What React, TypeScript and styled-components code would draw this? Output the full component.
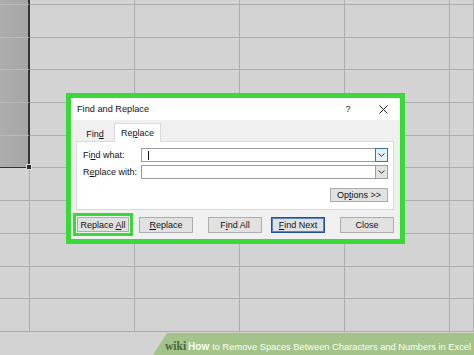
import React from 'react';
import styled, { createGlobalStyle, css } from 'styled-components';

const Global = createGlobalStyle`
  html, body { margin: 0; padding: 0; background: #d3d3d3; }
  body { font-family: "Liberation Sans", Arial, sans-serif; }
`;

const Page = styled.div`
  position: relative;
  width: 474px;
  height: 355px;
  overflow: hidden;
  background: #d3d3d3;
`;

const Sheet = styled.div`
  display: grid;
  grid-template-columns: 30px repeat(4, 105px) 1fr;
  grid-template-rows: 5px repeat(10, 32.7px);
`;

const Cell = styled.div<{ $sel?: boolean; $selLast?: boolean }>`
  position: relative;
  box-sizing: border-box;
  background: #d3d3d3;
  border-right: 1px solid #adadad;
  border-bottom: 1px solid #adadad;
  ${(p) =>
    p.$sel &&
    css`
      background: linear-gradient(90deg, #adadad 0%, #a6a6a6 100%);
      border-right: 2px solid #333;
      border-bottom-color: #bababa;
    `}
  ${(p) =>
    p.$selLast &&
    css`
      border-bottom: 1px solid #333;
    `}
`;

const Handle = styled.span`
  position: absolute;
  right: -4px;
  bottom: -3px;
  width: 4px;
  height: 4px;
  background: #2b2b2b;
  border: 1px solid #e0e0e0;
  z-index: 2;
`;

const Highlight = styled.div`
  position: absolute;
  left: 66px;
  top: 93px;
  width: 339px;
  height: 151px;
  box-sizing: border-box;
  border: 5px solid #3ad93a;
`;

const Dialog = styled.div`
  width: 100%;
  height: 100%;
  display: flex;
  flex-direction: column;
  background: #f0f0f0;
  color: #111;
  font-size: 9px;
`;

const TitleBar = styled.div`
  height: 22px;
  flex: none;
  display: flex;
  align-items: center;
  padding: 0 7px 0 6px;
  background: #fff;
`;

const Title = styled.span`
  font-size: 9.2px;
  color: #111;
`;

const Help = styled.span`
  margin-left: auto;
  width: 12px;
  text-align: center;
  font-size: 9px;
`;

const CloseX = styled.span`
  width: 20px;
  margin-left: 19px;
  display: flex;
  justify-content: center;
`;

const Body = styled.div`
  flex: 1;
  display: flex;
  flex-direction: column;
  padding: 3px 6px 0 5px;
`;

const TabStrip = styled.div`
  display: flex;
  align-items: flex-end;
  height: 18px;
  padding-left: 2px;
  position: relative;
  z-index: 1;
`;

const Tab = styled.div<{ $active?: boolean }>`
  box-sizing: border-box;
  display: flex;
  align-items: center;
  justify-content: center;
  height: ${(p) => (p.$active ? '19px' : '16px')};
  width: ${(p) => (p.$active ? '47px' : '34px')};
  margin-left: ${(p) => (p.$active ? '2px' : '0')};
  margin-bottom: ${(p) => (p.$active ? '-1px' : '0')};
  padding-top: ${(p) => (p.$active ? '0' : '1px')};
  background: ${(p) => (p.$active ? '#fff' : 'transparent')};
  border: ${(p) => (p.$active ? '1px solid #d9d9d9' : 'none')};
  border-bottom: none;
`;

const Key = styled.span`
  text-decoration: underline;
`;

const Panel = styled.div`
  box-sizing: border-box;
  height: 69px;
  background: #fff;
  border: 1px solid #d9d9d9;
  padding: 6px 5px 0 6px;
  display: flex;
  flex-direction: column;
`;

const FieldRow = styled.div<{ $gap?: number }>`
  display: flex;
  align-items: center;
  height: 14px;
  margin-top: ${(p) => p.$gap ?? 0}px;
`;

const Label = styled.span`
  width: 58px;
  flex: none;
`;

const Combo = styled.div`
  flex: 1;
  display: flex;
  height: 14px;
`;

const Field = styled.div`
  flex: 1;
  box-sizing: border-box;
  border: 1px solid #9c9c9c;
  border-right: none;
  background: #fff;
  display: flex;
  align-items: center;
  padding-left: 6px;
`;

const Caret = styled.span`
  width: 1px;
  height: 9px;
  background: #111;
`;

const DropBtn = styled.div<{ $focus?: boolean }>`
  box-sizing: border-box;
  width: 13px;
  height: 14px;
  display: flex;
  align-items: center;
  justify-content: center;
  border: 1px solid ${(p) => (p.$focus ? '#3b6fb0' : '#9c9c9c')};
  background: ${(p) => (p.$focus ? '#e5f1fb' : '#e3e3e3')};
`;

const OptionsRow = styled.div`
  display: flex;
  justify-content: flex-end;
  margin-top: 9px;
`;

const Button = styled.div<{ $default?: boolean; $ml?: number; $w?: number; $h?: number }>`
  box-sizing: border-box;
  width: ${(p) => p.$w ?? 54}px;
  height: ${(p) => p.$h ?? 16}px;
  margin-left: ${(p) => p.$ml ?? 0}px;
  display: flex;
  align-items: center;
  justify-content: center;
  background: #e1e1e1;
  border: 1px solid #adadad;
  font-size: 9px;
  color: #111;
  white-space: pre;
  ${(p) =>
    p.$default &&
    css`
      border: 1px solid #23509c;
      box-shadow: inset 0 0 0 1px #5a83c4;
    `}
`;

const ButtonRow = styled.div`
  display: flex;
  align-items: center;
  height: 23px;
  margin-top: 3px;
  margin-left: -3px;
`;

const GreenBox = styled.div`
  box-sizing: border-box;
  width: 60px;
  height: 23px;
  border: 3px solid #3ad93a;
  padding: 1px;
  display: flex;
  background: #f0f0f0;
`;

const Watermark = styled.div`
  position: absolute;
  left: 153px;
  right: 0;
  bottom: 0;
  height: 22px;
  background: rgba(160, 194, 135, 0.95);
  clip-path: polygon(14px 0, 100% 0, 100% 100%, 0 100%);
  display: flex;
  align-items: flex-end;
  padding: 0 0 3px 12px;
  box-sizing: border-box;
  white-space: nowrap;
  color: #fbfff6;
  font-size: 9.3px;
`;

const WikiMark = styled.span`
  font-family: "Liberation Serif", "Times New Roman", serif;
  font-weight: bold;
  font-size: 11.5px;
  color: #49683a;
  margin-right: 2px;
`;

const HowMark = styled.span`
  font-weight: bold;
  font-size: 10px;
  margin-right: 3px;
`;

const Chevron = () => (
  <svg width="7" height="4" viewBox="0 0 7 4">
    <path d="M0.5 0.5 L3.5 3.3 L6.5 0.5" fill="none" stroke="#333" strokeWidth="1" />
  </svg>
);

const XIcon = () => (
  <svg width="9" height="9" viewBox="0 0 9 9">
    <path d="M0.5 0.5 L8.5 8.5 M8.5 0.5 L0.5 8.5" stroke="#222" strokeWidth="1" />
  </svg>
);

const ROWS = 11;
const COLS = 6;

export default function App() {
  const cells: React.ReactNode[] = [];
  for (let r = 0; r < ROWS; r++) {
    for (let c = 0; c < COLS; c++) {
      const sel = c === 0 && r <= 5;
      const last = c === 0 && r === 5;
      cells.push(
        <Cell key={`${r}-${c}`} $sel={sel} $selLast={last}>
          {last && <Handle />}
        </Cell>
      );
    }
  }

  return (
    <Page>
      <Global />
      <Sheet>{cells}</Sheet>
      <Highlight>
        <Dialog>
          <TitleBar>
            <Title>Find and Replace</Title>
            <Help>?</Help>
            <CloseX>
              <XIcon />
            </CloseX>
          </TitleBar>
          <Body>
            <TabStrip>
              <Tab>
                <span>
                  Fin<Key>d</Key>
                </span>
              </Tab>
              <Tab $active>
                <span>
                  Re<Key>p</Key>lace
                </span>
              </Tab>
            </TabStrip>
            <Panel>
              <FieldRow>
                <Label>
                  Fi<Key>n</Key>d what:
                </Label>
                <Combo>
                  <Field>
                    <Caret />
                  </Field>
                  <DropBtn $focus>
                    <Chevron />
                  </DropBtn>
                </Combo>
              </FieldRow>
              <FieldRow $gap={3}>
                <Label>
                  R<Key>e</Key>place with:
                </Label>
                <Combo>
                  <Field />
                  <DropBtn>
                    <Chevron />
                  </DropBtn>
                </Combo>
              </FieldRow>
              <OptionsRow>
                <Button $w={58} $h={14}>
                  <span>
                    Op<Key>t</Key>ions &gt;&gt;
                  </span>
                </Button>
              </OptionsRow>
            </Panel>
            <ButtonRow>
              <GreenBox>
                <Button $w={52} $h={15}>
                  <span>
                    Replace <Key>A</Key>ll
                  </span>
                </Button>
              </GreenBox>
              <Button $ml={6}>
                <span>
                  <Key>R</Key>eplace
                </span>
              </Button>
              <Button $ml={15}>
                <span>
                  F<Key>i</Key>nd All
                </span>
              </Button>
              <Button $ml={9} $default>
                <span>
                  <Key>F</Key>ind Next
                </span>
              </Button>
              <Button $ml={15}>
                <span>Close</span>
              </Button>
            </ButtonRow>
          </Body>
        </Dialog>
      </Highlight>
      <Watermark>
        <WikiMark>wiki</WikiMark>
        <HowMark>How</HowMark>
        <span>to Remove Spaces Between Characters and Numbers in Excel</span>
      </Watermark>
    </Page>
  );
}
